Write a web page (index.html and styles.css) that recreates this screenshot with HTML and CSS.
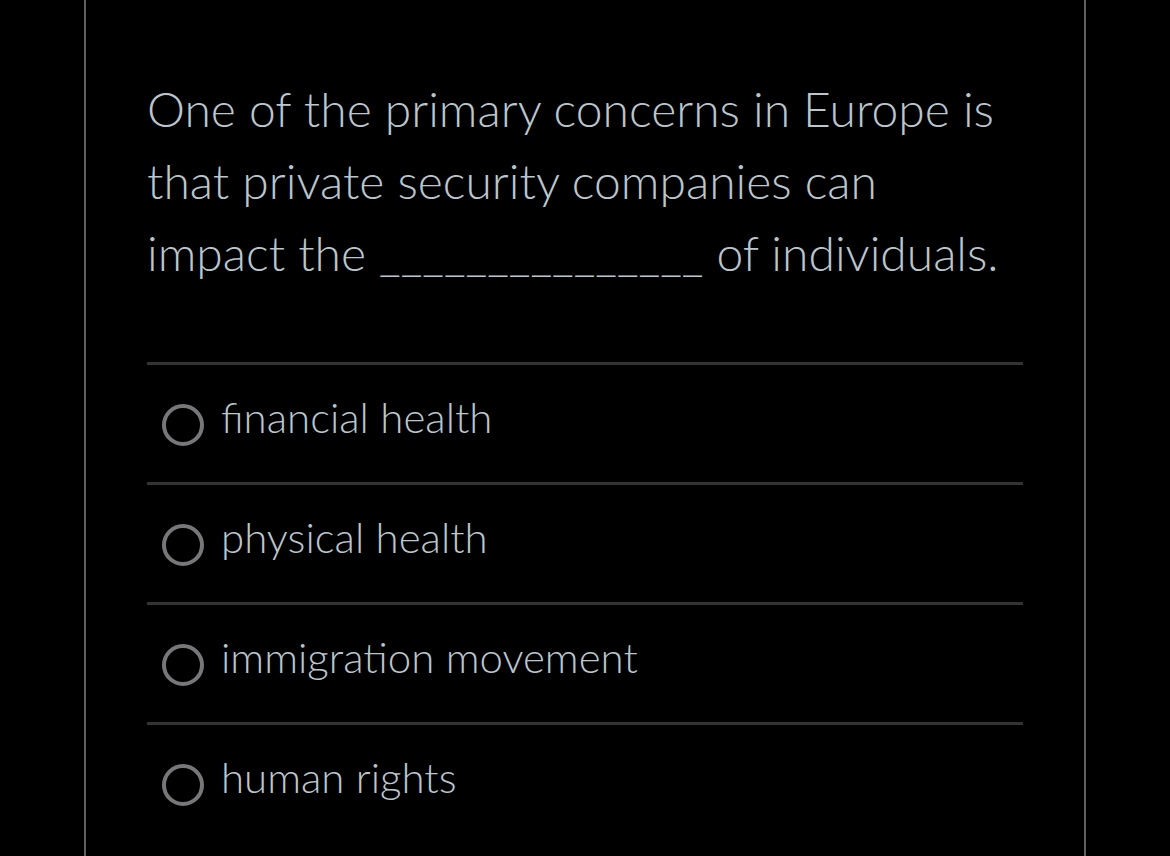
FILE: index.html
```html
<!DOCTYPE html>
<html lang="en">
<head>
<meta charset="utf-8">
<link rel="stylesheet" href="styles.css">
</head>
<body>
<main class="panel">
  <p class="question">One of the primary concerns in Europe is that private security companies can impact the <span class="blank">_______________</span> of individuals.</p>
  <ul class="options">
    <li class="option"><span class="radio"></span><span class="label">financial health</span></li>
    <li class="option"><span class="radio"></span><span class="label">physical health</span></li>
    <li class="option"><span class="radio"></span><span class="label">immigration movement</span></li>
    <li class="option"><span class="radio"></span><span class="label">human rights</span></li>
  </ul>
</main>
</body>
</html>
```
FILE: styles.css
```css
html, body {
  margin: 0;
  padding: 0;
  background: #000;
  height: 100%;
  overflow: hidden;
}
body {
  font-family: "Lato Light", Lato, "Open Sans", sans-serif;
  color: #bac6ce;
}
.panel {
  box-sizing: border-box;
  width: 1002px;
  margin-left: 84px;
  min-height: 100%;
  border-left: 2px solid #5f5f5f;
  border-right: 2px solid #5f5f5f;
  padding: 73px 61px 0 61px;
}
.question {
  margin: 0;
  max-width: 860px;
  font-size: 48px;
  font-weight: 300;
  line-height: 72px;
}
.options {
  list-style: none;
  margin: 73px 0 0 0;
  padding: 0;
}
.option {
  display: flex;
  align-items: center;
  height: 120px;
  box-sizing: border-box;
  border-top: 3px solid #333;
  padding-left: 15px;
  padding-top: 2px;
}
.radio {
  width: 34px;
  height: 34px;
  border: 4px solid #77777a;
  border-radius: 50%;
  flex: none;
}
.label {
  margin-left: 17px;
  margin-bottom: 16px;
  font-size: 42px;
  font-weight: 300;
}
```
